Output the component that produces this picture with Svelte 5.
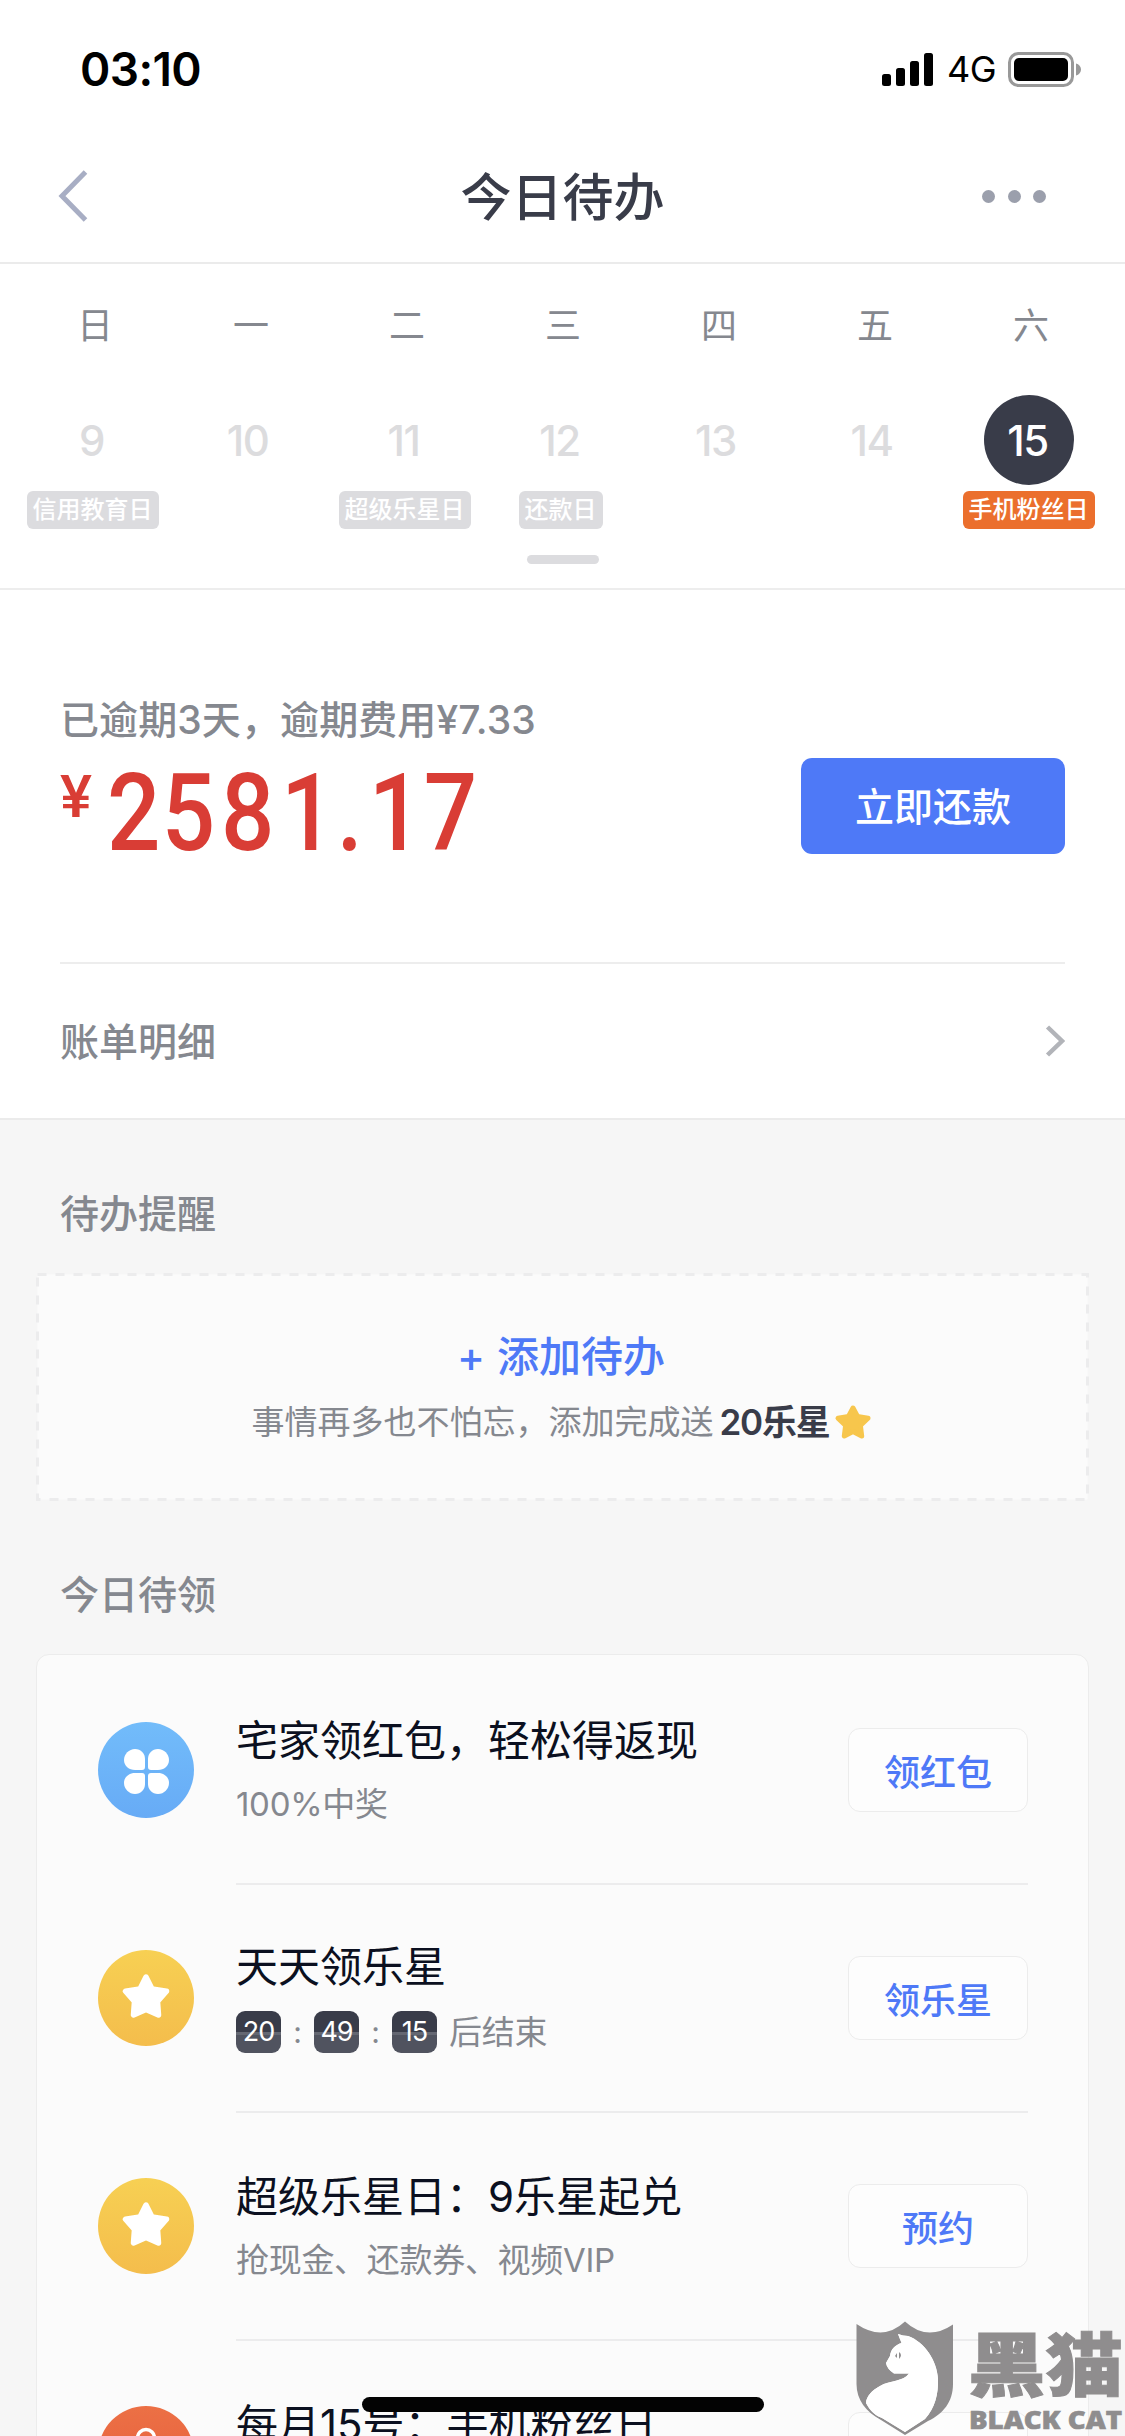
<script>
  const weekdays = ['日', '一', '二', '三', '四', '五', '六'];
  const dates = [
    { day: 9, tag: '信用教育日' },
    { day: 10 },
    { day: 11, tag: '超级乐星日' },
    { day: 12, tag: '还款日' },
    { day: 13 },
    { day: 14 },
    { day: 15, tag: '手机粉丝日', today: true }
  ];
  const tasks = [
    { icon: 'clover', title: '宅家领红包，轻松得返现', note: '100%中奖', action: '领红包' },
    { icon: 'star', title: '天天领乐星', timer: ['20', '49', '15'], note: '后结束', action: '领乐星' },
    { icon: 'star', title: '超级乐星日：9乐星起兑', note: '抢现金、还款券、视频VIP', action: '预约' },
    { icon: 'phone', title: '每月15号：手机粉丝日', note: '', action: '' }
  ];
</script>

<div class="screen">
  <header class="status">
    <span class="clock">03:10</span>
    <div class="status-right">
      <svg class="signal" width="52" height="33" viewBox="0 0 52 33">
        <rect x="0" y="21" width="9" height="12" rx="2.5" />
        <rect x="14" y="15" width="9" height="18" rx="2.5" />
        <rect x="28" y="8" width="9" height="25" rx="2.5" />
        <rect x="42" y="0" width="9" height="33" rx="2.5" />
      </svg>
      <span class="network">4G</span>
      <svg width="74" height="35" viewBox="0 0 74 35">
        <rect x="1.5" y="1.5" width="63" height="32" rx="9" fill="none" stroke="#999" stroke-width="3" />
        <rect x="6" y="6" width="54" height="23" rx="5" />
        <path d="M68 11.5c3 .8 5 3 5 6s-2 5.200-5 6z" fill="#999" />
      </svg>
    </div>
  </header>

  <nav class="nav">
    <svg class="back" width="32" height="54" viewBox="0 0 32 54">
      <path d="M28.500 3 5 27l23.500 24" fill="none" stroke="#a8aec4" stroke-width="5" />
    </svg>
    <h1>今日待办</h1>
    <div class="more"><i></i><i></i><i></i></div>
  </nav>

  <section class="calendar">
    <div class="weekdays">
      {#each weekdays as w}<span>{w}</span>{/each}
    </div>
    <div class="dates">
      {#each dates as d}
        <div class="date" class:today={d.today}>
          <span class="num">{d.day}</span>
          {#if d.tag}<span class="tag">{d.tag}</span>{/if}
        </div>
      {/each}
    </div>
    <div class="handle"></div>
  </section>

  <section class="bill">
    <div class="due">
      <div>
        <p class="overdue">已逾期3天，逾期费用¥7.33</p>
        <p class="amount">
          <svg width="430" height="130" viewBox="0 -10 430 130">
            <text class="yen" x="0" y="57" textLength="32" lengthAdjust="spacingAndGlyphs">¥</text>
            <text class="value" transform="scale(.87 1)" x="54 117 185 254 318 355 418" y="90">2581.17</text>
          </svg>
        </p>
      </div>
      <button class="pay">立即还款</button>
    </div>
    <div class="detail">
      <span>账单明细</span>
      <svg width="20" height="34" viewBox="0 0 20 34">
        <path d="M2.500 3 17 17 2.500 31" fill="none" stroke="#b2b4b9" stroke-width="4.500" />
      </svg>
    </div>
  </section>

  <main>
    <h2>待办提醒</h2>
    <div class="add">
      <svg class="dash" width="1053" height="228" viewBox="0 0 1053 228">
        <rect x="1.500" y="1.500" width="1050" height="225" fill="#fbfbfb" stroke="#ececed" stroke-width="3" stroke-dasharray="9 9" />
      </svg>
      <div class="add-title">+ 添加待办</div>
      <div class="add-note">
        <span>事情再多也不怕忘，添加完成送</span>
        <b>20乐星</b>
        <svg width="38" height="36" viewBox="0 0 38 36">
          <path d="M19 4l4.500 8.500 10.500 1.800-7.600 7.200 1.300 10.500L19 27.500 10.300 32l1.300-10.500L4 14.300l10.500-1.800z" fill="#f7c64c" stroke="#f7c64c" stroke-width="5" stroke-linejoin="round" />
        </svg>
      </div>
    </div>

    <h2 class="second">今日待领</h2>
    <div class="card">
      {#each tasks as t}
        <article>
          <div class="icon {t.icon}">
            <svg width="96" height="96" viewBox="0 0 96 96">
              {#if t.icon === 'clover'}
                <g fill="#fff">
                  <path d="M37 27c6 0 10 4.500 10 10V45c0 2-1 3-3 3h-7c-6 0-11-4-11-10s5-11 11-11z" />
                  <path d="M60 27c-6 0-10 4.500-10 10V45c0 2 1 3 3 3h7c6 0 11-4 11-10s-5-11-11-11z" />
                  <path d="M37 72c6 0 10-4.500 10-10V54c0-2-1-3-3-3h-7c-6 0-11 4-11 10s5 11 11 11z" />
                  <path d="M60 72c-6 0-10-4.500-10-10V54c0-2 1-3 3-3h7c6 0 11 4 11 10s-5 11-11 11z" />
                </g>
              {:else if t.icon === 'star'}
                <path d="M48 27l6 12 14.500 2.300L59.500 51.500l1 13.500L48 59.500 35.500 65 36.500 51.500 27.500 41.300 42 39z" fill="#fff" stroke="#fff" stroke-width="5.500" stroke-linejoin="round" />
              {:else}
                <circle cx="48" cy="32" r="8.500" fill="none" stroke="#fff" stroke-width="3.500" />
              {/if}
            </svg>
          </div>
          <div class="body">
            <div class="text">
              <h3 class:raised={t.timer}>{t.title}</h3>
              <p class:countdown={t.timer}>
                {#if t.timer}
                  {#each t.timer as n, i}
                    {#if i > 0}<i>:</i>{/if}<span class="chip">{n}</span>
                  {/each}
                {/if}
                <span>{t.note}</span>
              </p>
            </div>
            <button class="claim">{t.action}</button>
          </div>
        </article>
      {/each}
    </div>
  </main>

  <div class="home"></div>

  <svg class="brand" width="285" height="136" viewBox="0 0 285 136">
    <path class="shield" fill-rule="evenodd" d="M16.500 24Q43 42 65 21.500 87 42 113 24.500V84C113 102 103 114 88 121L65 135 41 120C26 112 16.500 100 16.500 84ZM58 34 61.500 43C55 45 51 49 50 56L46 63Q47 69 54 73.500H69C63 82 50 80 40 86 32 90 26 97 26 103 30 111 36 116 42 118L65 132 85 119C95 108 98.500 94 98 79 97 61 85 42 68 36L63 35.500Z" />
    <path d="M26 103C30 111 36 116 42 118L65 132 85 119C95 108 98.500 94 98 79 97 61 85 42 68 36L63 35.500 58 34 61.500 43C55 45 51 49 50 56L46 63Q47 69 54 73.500H69C63 82 50 80 40 86 32 90 26 97 26 103Z" fill="#fff" />
    <path class="shield" d="M57 53l-2 3 2 2zM59 52q4 3 0 7z" />
    <text class="cn" x="128" y="91" textLength="155" lengthAdjust="spacingAndGlyphs">黑猫</text>
    <text class="en" x="129" y="129" textLength="153" lengthAdjust="spacingAndGlyphs">BLACK CAT</text>
  </svg>
</div>

<style>
  :global(body) {
    margin: 0;
    background: #f6f6f6;
  }
  h1,
  h2,
  h3,
  p {
    margin: 0;
    font-weight: 400;
  }
  .screen {
    position: relative;
    width: 1125px;
    height: 2436px;
    overflow: hidden;
    background: #f6f6f6;
    font-family: Inter, 'Noto Sans CJK SC', sans-serif;
    color: #85888f;
  }
  svg {
    display: block;
    flex: none;
  }
  button {
    padding: 0;
    font-family: inherit;
  }
  .status {
    box-sizing: border-box;
    height: 132px;
    padding: 52px 43px 0 80px;
    display: flex;
    justify-content: space-between;
    align-items: flex-start;
    background: #fff;
    color: #000;
  }
  .clock {
    font-size: 46px;
    line-height: 34px;
    font-weight: 600;
    letter-spacing: -0.6px;
  }
  .status-right {
    display: flex;
    align-items: center;
  }
  .network {
    width: 47px;
    margin: 0 14px 0 13px;
    font-size: 36px;
    line-height: 35px;
    letter-spacing: -0.5px;
  }
  .nav {
    box-sizing: border-box;
    height: 132px;
    padding: 0 79px 2px 57px;
    display: grid;
    grid-template-columns: 1fr auto 1fr;
    align-items: center;
    background: #fff;
    border-bottom: 2px solid #ebebeb;
  }
  .nav h1 {
    margin: 4px -22px 0 0;
    font-size: 51px;
    line-height: 60px;
    font-weight: 500;
    color: #393c49;
  }
  .more {
    display: flex;
    gap: 12.5px;
    justify-self: end;
  }
  .more i {
    width: 13px;
    height: 13px;
    border-radius: 50%;
    background: #9b9fac;
  }
  .calendar {
    box-sizing: border-box;
    height: 326px;
    background: #fff;
    border-bottom: 2px solid #ededed;
  }
  .weekdays,
  .dates {
    display: grid;
    grid-template-columns: repeat(7, 156px);
    text-align: center;
  }
  .weekdays {
    padding: 42px 0 0 17px;
    font-size: 36px;
    line-height: 40px;
  }
  .dates {
    height: 134px;
    padding: 49px 0 0 14.5px;
  }
  .date {
    display: flex;
    flex-direction: column;
    align-items: center;
    gap: 6px;
  }
  .num {
    box-sizing: border-box;
    width: 90px;
    height: 90px;
    padding-right: 2px;
    border-radius: 50%;
    font-size: 42px;
    line-height: 91px;
    font-weight: 500;
    letter-spacing: -1.5px;
    color: #dcdcde;
  }
  .tag {
    padding: 0 6px;
    border-radius: 6px;
    background: #dcdcdf;
    color: #fff;
    font-size: 24px;
    line-height: 38px;
    font-weight: 500;
    white-space: nowrap;
  }
  .today .num {
    background: #393c49;
    color: #fff;
  }
  .today .tag {
    background: #eb6f2d;
  }
  .handle {
    width: 72px;
    height: 9px;
    margin: 26px auto 0;
    border-radius: 4.500px;
    background: #dcdcdf;
  }
  .bill {
    box-sizing: border-box;
    height: 530px;
    padding: 0 60px;
    background: #fff;
    border-bottom: 2px solid #ebebeb;
  }
  .due {
    box-sizing: border-box;
    height: 374px;
    padding-top: 105px;
    display: flex;
    justify-content: space-between;
    border-bottom: 2px solid #ededed;
  }
  .overdue {
    font-size: 39px;
    line-height: 50px;
    font-weight: 500;
    letter-spacing: 0.1px;
  }
  .amount {
    padding-top: 5px;
  }
  .yen,
  .value {
    fill: #d93d35;
    font-family: Roboto, sans-serif;
    font-weight: 500;
  }
  .yen {
    font-size: 60px;
  }
  .value {
    font-size: 108px;
  }
  .pay {
    width: 264px;
    height: 96px;
    margin-top: 63px;
    padding-bottom: 5px;
    border: 0;
    border-radius: 11px;
    background: #4e79f7;
    color: #fff;
    font-size: 39px;
    font-weight: 500;
  }
  .detail {
    height: 154px;
    display: flex;
    align-items: center;
    justify-content: space-between;
    font-size: 39px;
    font-weight: 500;
  }
  .detail span {
    padding-bottom: 5px;
  }
  main {
    padding: 64px 36px 0;
  }
  main h2 {
    padding-left: 24px;
    font-size: 39px;
    line-height: 60px;
    font-weight: 500;
  }
  main h2.second {
    margin-top: 64px;
  }
  .add {
    position: relative;
    height: 228px;
    margin-top: 29px;
    display: flex;
    flex-direction: column;
    align-items: center;
  }
  .dash {
    position: absolute;
    inset: 0;
  }
  .add-title {
    position: relative;
    margin: 54px 3px 0 0;
    font-size: 42px;
    line-height: 60px;
    font-weight: 500;
    word-spacing: 1px;
    color: #4e79f7;
  }
  .add-note {
    position: relative;
    margin: 11px 2px 0 0;
    display: flex;
    align-items: center;
    font-size: 33px;
    line-height: 48px;
    white-space: nowrap;
  }
  .add-note b {
    margin: 0 4px 0 6px;
    font-size: 35px;
    font-weight: 600;
    letter-spacing: -1.2px;
    color: #393c49;
  }
  .card {
    height: 800px;
    margin-top: 29px;
    padding-top: 2px;
    border: 1.500px solid #ececec;
    border-radius: 13px;
    background: #fbfbfb;
  }
  article {
    height: 228px;
    padding: 0 60px 0 61px;
    box-sizing: border-box;
    display: flex;
    gap: 42px;
  }
  .icon {
    width: 96px;
    height: 96px;
    margin-top: 65px;
    border-radius: 50%;
    flex: none;
  }
  .clover {
    background: linear-gradient(#72bcfa, #67abf6);
  }
  .star {
    background: linear-gradient(#f7d053, #f4bd4c);
  }
  .phone {
    background: linear-gradient(#ec7045, #e65c3c);
  }
  .body {
    flex: 1;
    display: flex;
    justify-content: space-between;
    border-bottom: 2px solid #ececed;
  }
  .text h3 {
    margin-top: 54px;
    font-size: 42px;
    line-height: 60px;
    color: #0b1020;
    white-space: nowrap;
  }
  .text h3.raised {
    margin: 52px 0 11px;
  }
  .text p {
    margin-top: 9px;
    font-size: 33px;
    line-height: 48px;
    letter-spacing: -0.3px;
    white-space: nowrap;
  }
  .text .countdown {
    margin-top: 0;
    display: flex;
    align-items: center;
  }
  .countdown i {
    width: 33px;
    text-align: center;
    font-style: normal;
    font-size: 30px;
  }
  .chip {
    width: 45px;
    height: 42px;
    border-radius: 9px;
    background: linear-gradient(#393c49 50%, #646772 50%, #646772 57%, #50535f 57%);
    color: #fff;
    font-size: 27px;
    line-height: 42px;
    text-align: center;
    letter-spacing: -1px;
  }
  .chip + span:last-child {
    margin-left: 12px;
  }
  .claim {
    width: 180px;
    height: 84px;
    margin-top: 71px;
    border: 1.500px solid #ececec;
    border-radius: 12px;
    background: #fdfdfd;
    color: #4e79f7;
    font-size: 36px;
    font-weight: 500;
  }
  .home {
    position: absolute;
    left: 362px;
    top: 2397px;
    width: 402px;
    height: 15px;
    border-radius: 8px;
    background: #030303;
  }
  .brand {
    position: absolute;
    right: 0;
    bottom: 0;
  }
  .shield,
  .cn,
  .en {
    fill: #8f8d8e;
  }
  .cn {
    font-family: 'Noto Sans CJK SC', sans-serif;
    font-size: 69px;
    font-weight: 900;
    stroke: #8f8d8e;
    stroke-width: 1;
  }
  .en {
    font-family: 'Open Sans', sans-serif;
    font-size: 24px;
    font-weight: 800;
    stroke: #8f8d8e;
    stroke-width: 0.6;
  }
</style>
